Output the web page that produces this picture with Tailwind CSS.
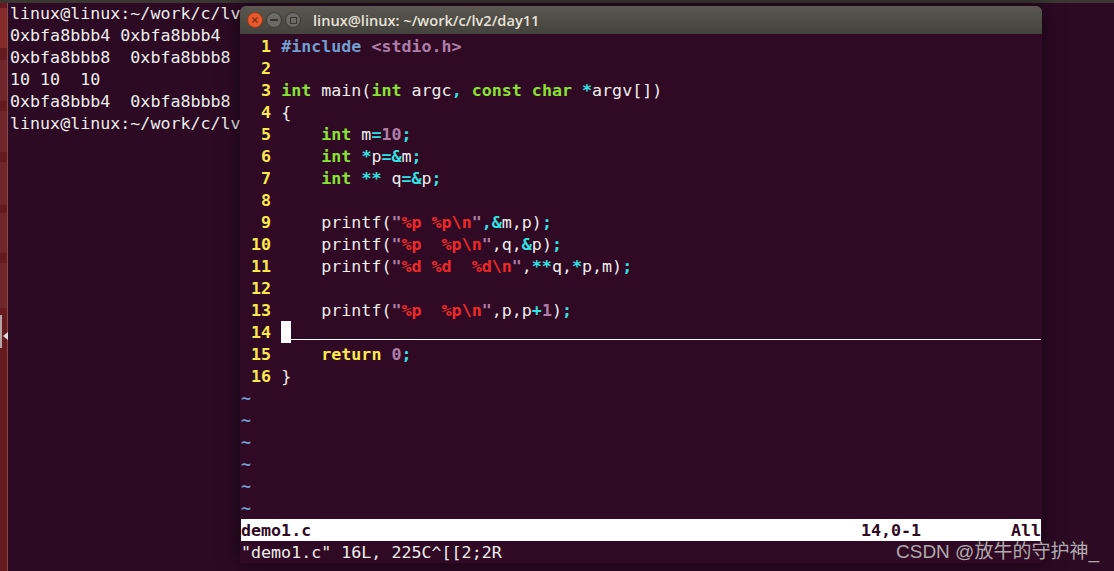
<!DOCTYPE html>
<html lang="en">
<head>
    <meta charset="UTF-8">
    <title>vim demo1.c</title>
    <script src="https://cdn.jsdelivr.net/npm/@tailwindcss/browser@4"></script>
</head>
<body class="relative w-[1114px] h-[571px] overflow-hidden bg-[#2c0a24] font-['DejaVu_Sans_Mono',monospace] text-[16.67px] leading-[22px] text-[#eeeeec]">
    <div class="h-[3px] bg-[#3a3630]"></div>
    <div class="flex h-[568px]">
        <!-- launcher strip -->
        <div class="relative w-[8px] bg-[#651a1f] border-r border-[#8a4a4a]">
            <div class="absolute left-0 top-[5px] w-[7px] h-[40px] bg-[#852a2a]"></div>
            <div class="absolute left-0 top-[57px] w-[7px] h-[41px] bg-[#6f272b]"></div>
            <div class="absolute left-0 top-[108px] w-[7px] h-[41px] bg-[#6f272b]"></div>
            <div class="absolute left-0 top-[159px] w-[7px] h-[43px] bg-[#6f272b]"></div>
            <div class="absolute left-0 top-[210px] w-[7px] h-[40px] bg-[#6f272b]"></div>
            <div class="absolute left-0 top-[260px] w-[7px] h-[45px] bg-[#6f272b]"></div>
            <div class="absolute left-0 top-[312px] w-[2px] h-[33px] bg-[#b5a5a5]"></div>
            <div class="absolute left-[3px] top-[329px] w-0 h-0 border-y-[4px] border-y-transparent border-r-[5px] border-r-[#ddd]"></div>
        </div>
        <!-- terminal behind -->
        <div class="flex-1 pl-[2px]">
            <div class="h-[22px] whitespace-pre">linux@linux:~/work/c/lv2/day11$ ./a.out</div>
            <div class="h-[22px] whitespace-pre">0xbfa8bbb4 0xbfa8bbb4</div>
            <div class="h-[22px] whitespace-pre">0xbfa8bbb8  0xbfa8bbb8</div>
            <div class="h-[22px] whitespace-pre">10 10  10</div>
            <div class="h-[22px] whitespace-pre">0xbfa8bbb4  0xbfa8bbb8</div>
            <div class="h-[22px] whitespace-pre">linux@linux:~/work/c/lv2/day11$</div>
        </div>
    </div>

    <!-- vim window -->
    <div class="absolute left-[240px] top-[6px] w-[802px] h-[557px] flex flex-col rounded-t-[6px] overflow-hidden bg-[#300a24] shadow-[0_0_22px_rgba(0,0,0,0.55)]">
        <div class="flex items-center h-[28px] shrink-0 bg-gradient-to-b from-[#5a5850] to-[#43423c]">
            <div class="flex items-center gap-[3px] pl-[7px]">
                <div class="w-[16px] h-[16px] rounded-full bg-[#e9592d] border border-[#8f3a1c] flex items-center justify-center">
                    <svg width="8" height="8" viewBox="0 0 8 8"><path d="M1.5 1.5l5 5M6.5 1.5l-5 5" stroke="#7a2a12" stroke-width="1.2"/></svg>
                </div>
                <div class="w-[16px] h-[16px] rounded-full bg-[#6b6a64] border border-[#3a3934] flex items-center justify-center">
                    <div class="w-[8px] h-[1.5px] bg-[#35342f]"></div>
                </div>
                <div class="w-[16px] h-[16px] rounded-full bg-[#6b6a64] border border-[#3a3934] flex items-center justify-center">
                    <div class="w-[7px] h-[7px] border border-[#35342f]"></div>
                </div>
            </div>
            <div class="ml-[12px] font-['Open_Sans',sans-serif] text-[14.6px] font-semibold text-[#e6e2d9] whitespace-pre">linux@linux: ~/work/c/lv2/day11</div>
        </div>
        <div class="pl-[1px] pr-[1px] pt-[1px] leading-[24px]">
            <div class="h-[22px] whitespace-pre"><b class="text-[#fce94f]">  1 </b><b class="text-[#729fcf]">#include </b><b class="text-[#ad7fa8]">&lt;stdio.h&gt;</b></div>
            <div class="h-[22px] whitespace-pre"><b class="text-[#fce94f]">  2 </b></div>
            <div class="h-[22px] whitespace-pre"><b class="text-[#fce94f]">  3 </b><b class="text-[#8ae234]">int</b> main(<b class="text-[#8ae234]">int</b> argc<b class="text-[#34e2e2]">,</b> <b class="text-[#8ae234]">const</b> <b class="text-[#8ae234]">char</b> <b class="text-[#34e2e2]">*</b>argv[])</div>
            <div class="h-[22px] whitespace-pre"><b class="text-[#fce94f]">  4 </b>{</div>
            <div class="h-[22px] whitespace-pre"><b class="text-[#fce94f]">  5 </b>    <b class="text-[#8ae234]">int</b> m<b class="text-[#34e2e2]">=</b><b class="text-[#ad7fa8]">10</b><b class="text-[#34e2e2]">;</b></div>
            <div class="h-[22px] whitespace-pre"><b class="text-[#fce94f]">  6 </b>    <b class="text-[#8ae234]">int</b> <b class="text-[#34e2e2]">*</b>p<b class="text-[#34e2e2]">=&amp;</b>m<b class="text-[#34e2e2]">;</b></div>
            <div class="h-[22px] whitespace-pre"><b class="text-[#fce94f]">  7 </b>    <b class="text-[#8ae234]">int</b> <b class="text-[#34e2e2]">**</b> q<b class="text-[#34e2e2]">=&amp;</b>p<b class="text-[#34e2e2]">;</b></div>
            <div class="h-[22px] whitespace-pre"><b class="text-[#fce94f]">  8 </b></div>
            <div class="h-[22px] whitespace-pre"><b class="text-[#fce94f]">  9 </b>    printf(<b class="text-[#ad7fa8]">"</b><b class="text-[#ef2929]">%p %p\n</b><b class="text-[#ad7fa8]">"</b><b class="text-[#34e2e2]">,&amp;</b>m,p)<b class="text-[#34e2e2]">;</b></div>
            <div class="h-[22px] whitespace-pre"><b class="text-[#fce94f]"> 10 </b>    printf(<b class="text-[#ad7fa8]">"</b><b class="text-[#ef2929]">%p  %p\n</b><b class="text-[#ad7fa8]">"</b>,q,<b class="text-[#34e2e2]">&amp;</b>p)<b class="text-[#34e2e2]">;</b></div>
            <div class="h-[22px] whitespace-pre"><b class="text-[#fce94f]"> 11 </b>    printf(<b class="text-[#ad7fa8]">"</b><b class="text-[#ef2929]">%d %d  %d\n</b><b class="text-[#ad7fa8]">"</b>,<b class="text-[#34e2e2]">**</b>q,<b class="text-[#34e2e2]">*</b>p,m)<b class="text-[#34e2e2]">;</b></div>
            <div class="h-[22px] whitespace-pre"><b class="text-[#fce94f]"> 12 </b></div>
            <div class="h-[22px] whitespace-pre"><b class="text-[#fce94f]"> 13 </b>    printf(<b class="text-[#ad7fa8]">"</b><b class="text-[#ef2929]">%p  %p\n</b><b class="text-[#ad7fa8]">"</b>,p,p<b class="text-[#34e2e2]">+</b><b class="text-[#ad7fa8]">1</b>)<b class="text-[#34e2e2]">;</b></div>
            <div class="h-[22px] flex items-start whitespace-pre"><b class="text-[#fce94f]"> 14 </b><div class="w-[10px] h-[22px] bg-white"></div><div class="flex-1 h-[19px] border-b border-white"></div></div>
            <div class="h-[22px] whitespace-pre"><b class="text-[#fce94f]"> 15 </b>    <b class="text-[#fce94f]">return</b> <b class="text-[#ad7fa8]">0</b><b class="text-[#34e2e2]">;</b></div>
            <div class="h-[22px] whitespace-pre"><b class="text-[#fce94f]"> 16 </b>}</div>
            <div class="h-[22px] font-bold text-[#729fcf]">~</div>
            <div class="h-[22px] font-bold text-[#729fcf]">~</div>
            <div class="h-[22px] font-bold text-[#729fcf]">~</div>
            <div class="h-[22px] font-bold text-[#729fcf]">~</div>
            <div class="h-[22px] font-bold text-[#729fcf]">~</div>
            <div class="h-[22px] font-bold text-[#729fcf]">~</div>
            <div class="h-[22px] flex overflow-hidden bg-white font-bold text-[#300a24]">
                <span>demo1.c</span>
                <span class="ml-auto w-[150px]">14,0-1</span>
                <span>All</span>
            </div>
            <div class="h-[22px] whitespace-pre">"demo1.c" 16L, 225C^[[2;2R</div>
        </div>
    </div>

    <!-- watermark -->
    <div class="absolute left-[896px] top-[540px] font-['Liberation_Sans','Noto_Sans_CJK_SC',sans-serif] text-[19px] leading-[24px] text-[#b0aaae] whitespace-pre">CSDN @放牛的守护神_</div>
</body>
</html>
